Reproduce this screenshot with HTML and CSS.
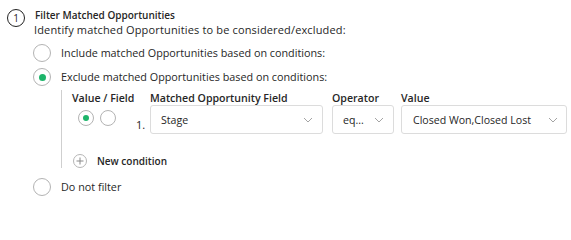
FILE: index.html
```html
<!DOCTYPE html>
<html>
<head>
<meta charset="utf-8">
<link rel="stylesheet" href="styles.css">
</head>
<body>
<div class="step">
  <div class="num">1</div>
  <div class="content">
    <div class="title">Filter Matched Opportunities</div>
    <div class="desc">Identify matched Opportunities to be considered/excluded:</div>
    <div class="option first"><span class="radio"></span><span class="label">Include matched Opportunities based on conditions:</span></div>
    <div class="option"><span class="radio checked"></span><span class="label">Exclude matched Opportunities based on conditions:</span></div>
    <div class="conditions">
      <div class="head-row">
        <div class="c-vf">Value / Field</div>
        <div class="c-field">Matched Opportunity Field</div>
        <div class="c-op">Operator</div>
        <div class="c-val">Value</div>
      </div>
      <div class="cond-row">
        <div class="c-vf cell-vf">
          <span class="radio small checked"></span><span class="radio small"></span>
          <span class="idx">1.</span>
        </div>
        <div class="select s-field"><span>Stage</span><svg class="chev" viewBox="0 0 10 6" width="10" height="6"><path d="M1 1l4 4 4-4" fill="none" stroke="#9a9a9a" stroke-width="0.9"/></svg></div>
        <div class="select s-op"><span>eq...</span><svg class="chev" viewBox="0 0 10 6" width="10" height="6"><path d="M1 1l4 4 4-4" fill="none" stroke="#9a9a9a" stroke-width="0.9"/></svg></div>
        <div class="select s-val"><span>Closed Won,Closed Lost</span><svg class="chev" viewBox="0 0 10 6" width="10" height="6"><path d="M1 1l4 4 4-4" fill="none" stroke="#9a9a9a" stroke-width="0.9"/></svg></div>
      </div>
      <div class="add-row">
        <svg class="plus" viewBox="0 0 14 14" width="14" height="14"><circle cx="7" cy="7" r="6.5" fill="none" stroke="#b5b5b5" stroke-width="1"/><path d="M7 3.5v7M3.5 7h7" stroke="#8a8a8a" stroke-width="1"/></svg>
        <span class="add-label">New condition</span>
      </div>
    </div>
    <div class="option last"><span class="radio"></span><span class="label">Do not filter</span></div>
  </div>
</div>
</body>
</html>
```
FILE: styles.css
```css
html, body {
  margin: 0;
  padding: 0;
  background: #fff;
}
body {
  font-family: "Open Sans", "Liberation Sans", sans-serif;
  color: #262626;
  font-size: 11px;
}
.step {
  display: flex;
  padding: 9px 0 0 7px;
}
.num {
  width: 16px;
  height: 16px;
  border: 1px solid #222;
  border-radius: 50%;
  font-size: 10px;
  line-height: 16px;
  text-align: center;
  flex: none;
  margin-right: 10px;
}
.content {
  display: flex;
  flex-direction: column;
}
.title {
  font-weight: 600;
  font-size: 10px;
  line-height: 14px;
  margin-top: -1px;
}
.desc {
  font-size: 11px;
  letter-spacing: 0.15px;
  line-height: 16px;
  margin-left: -1px;
}
.option {
  display: flex;
  align-items: center;
  margin-top: 6px;
  margin-left: -2px;
  height: 18px;
}
.option.first { margin-top: 6px; }
.radio {
  box-sizing: border-box;
  width: 18px;
  height: 18px;
  border: 1px solid #b3b3b3;
  border-radius: 50%;
  display: inline-flex;
  align-items: center;
  justify-content: center;
  flex: none;
  background: #fff;
}
.radio.checked::after {
  content: "";
  width: 7px;
  height: 7px;
  border-radius: 50%;
  background: #1db56a;
}
.radio.small {
  width: 16px;
  height: 16px;
}
.radio.small.checked::after {
  width: 6px;
  height: 6px;
}
.label {
  font-size: 10.8px;
  margin-left: 10px;
  line-height: 16px;
}
.conditions {
  margin: 4px 0 0 26px;
  border-left: 1px solid #cfcfcf;
  padding: 1px 0 0 10px;
  height: 78px;
  box-sizing: border-box;
}
.head-row {
  display: flex;
  font-weight: 600;
  font-size: 10.6px;
  line-height: 14px;
}
.c-vf { width: 78px; flex: none; }
.c-field { width: 182px; flex: none; }
.c-op { width: 69px; flex: none; }
.c-val { flex: none; }
.cond-row {
  display: flex;
  height: 29px;
}
.cell-vf {
  display: flex;
  align-items: flex-start;
  padding-left: 6px;
  box-sizing: border-box;
  gap: 6px;
  padding-top: 5px;
  position: relative;
}
.idx {
  position: absolute;
  left: 64px;
  top: 13px;
  font-size: 11px;
  line-height: 14px;
}
.select {
  box-sizing: border-box;
  height: 29px;
  border: 1px solid #dcdcdc;
  border-radius: 3px;
  display: flex;
  align-items: center;
  justify-content: space-between;
  font-size: 10.6px;
  flex: none;
}
.s-field { width: 173px; margin-right: 9px; padding: 0 9px 0 10px; }
.s-op { width: 62px; margin-right: 7px; padding: 0 9px 0 10px; }
.s-val { width: 166px; padding: 0 8px 0 11px; }
.chev { flex: none; }
.add-row {
  display: flex;
  align-items: center;
  margin-top: 20px;
  padding-left: 1px;
  height: 14px;
}
.add-label {
  font-weight: 600;
  font-size: 10px;
  margin-left: 10px;
}
.option.last { margin-top: 10px; }
```
